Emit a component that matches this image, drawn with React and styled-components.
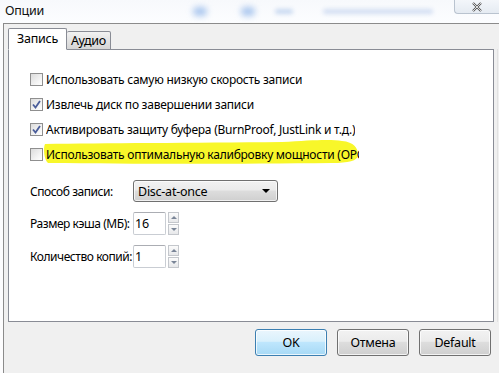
import React from "react";
import styled, { createGlobalStyle } from "styled-components";

const Global = createGlobalStyle`
  html, body { margin: 0; padding: 0; background: #ffffff; }
  body { font-family: "Noto Sans", "Open Sans", sans-serif; font-size: 12px; letter-spacing: -0.25px; color: #000; }
`;

const Win = styled.div`
  width: 499px;
  height: 373px;
  overflow: hidden;
  background: #fdfdfe;
  display: flex;
  flex-direction: column;
`;

const TitleBar = styled.div`
  height: 23px;
  flex: none;
  display: flex;
  align-items: center;
  padding-left: 5px;
  font-size: 12.5px;
  color: #111;
  background: linear-gradient(#f7f9fc, #fcfdff);
`;

const Title = styled.span`
  width: 180px;
  margin-top: -2px;
`;

const Blob = styled.span`
  display: block;
  width: ${(p) => p.$w}px;
  height: ${(p) => p.$h}px;
  margin-left: ${(p) => p.$ml}px;
  border-radius: 6px;
  background: ${(p) => p.$c};
  filter: blur(${(p) => p.$b}px);
`;

const CloseBtn = styled.div`
  margin-left: auto;
  align-self: flex-start;
  width: 44px;
  height: 13px;
  border: 1px solid #b9c3cf;
  border-top: none;
  border-right: none;
  border-radius: 0 0 0 4px;
  background: linear-gradient(#f3f6fa, #e5ebf2);
  display: flex;
  align-items: center;
  justify-content: center;
`;

const Frame = styled.div`
  flex: 1;
  margin-left: 3px;
  border-left: 1px solid #8b8b8b;
  border-top: 1px solid #8b8b8b;
  background: #f0f0f0;
  padding: 4px 0 0 4px;
  display: flex;
  flex-direction: column;
`;

const Tabs = styled.div`
  display: flex;
  align-items: flex-end;
  height: 22px;
  position: relative;
  z-index: 1;
  margin-bottom: -1px;
`;

const Tab = styled.div`
  height: ${(p) => (p.$active ? 22 : 19)}px;
  padding: 0 ${(p) => (p.$active ? 8 : 4)}px;
  box-sizing: border-box;
  border: 1px solid #898c95;
  border-bottom: ${(p) => (p.$active ? "1px solid #ffffff" : "1px solid #898c95")};
  ${(p) => (p.$active ? "" : "border-left: none;")}
  border-radius: 2px 2px 0 0;
  background: ${(p) => (p.$active ? "#ffffff" : "linear-gradient(#f2f2f2, #e3e3e3 50%, #d6d6d6)")};
  display: flex;
  align-items: center;
  font-size: 12.5px;
  color: #000;
  padding-bottom: ${(p) => (p.$active ? 2 : 0)}px;
`;

const Body = styled.div`
  display: flex;
  align-items: stretch;
`;

const Panel = styled.div`
  width: 486px;
  height: 273px;
  flex: none;
  box-sizing: border-box;
  border: 1px solid #898c95;
  background: #ffffff;
  padding: 23px 0 0 21px;
  display: flex;
  flex-direction: column;
`;

const EdgeLine = styled.div`
  margin-left: 3px;
  width: 1px;
  background: #e2e2e2;
`;

const CheckList = styled.div`
  display: flex;
  flex-direction: column;
  gap: 12px;
`;

const CheckRow = styled.div`
  display: flex;
  align-items: center;
  height: 13px;
  gap: 3px;
  position: relative;
`;

const Box = styled.span`
  width: 13px;
  height: 13px;
  flex: none;
  box-sizing: border-box;
  border: 1px solid #8f8f8f;
  background: linear-gradient(135deg, #dcdcdc, #f6f6f6 70%, #ffffff);
  display: flex;
  align-items: center;
  justify-content: center;
  position: relative;
  z-index: 1;
`;

const Label = styled.span`
  white-space: nowrap;
  overflow: hidden;
  max-width: ${(p) => (p.$max ? p.$max + "px" : "none")};
  position: relative;
  z-index: 1;
  line-height: 16px;
`;

const Marker = styled.svg`
  position: absolute;
  left: 12px;
  top: -12px;
  z-index: 0;
`;

const Form = styled.div`
  margin-top: 19px;
  display: flex;
  flex-direction: column;
  gap: 10px;
`;

const FormRow = styled.div`
  display: flex;
  align-items: center;
  height: ${(p) => p.$h}px;
`;

const FieldLabel = styled.span`
  flex: none;
  min-width: ${(p) => p.$w}px;
  white-space: nowrap;
  letter-spacing: -0.45px;
`;

const Select = styled.div`
  width: 145px;
  height: 22px;
  box-sizing: border-box;
  border: 1px solid #707070;
  border-radius: 3px;
  background: linear-gradient(#f2f2f2, #ebebeb 45%, #dddddd 50%, #cfcfcf);
  box-shadow: inset 0 0 0 1px rgba(255, 255, 255, 0.7);
  display: flex;
  align-items: center;
  justify-content: space-between;
  padding: 0 7px 0 4px;
  font-size: 12.5px;
`;

const Arrow = styled.span`
  width: 0;
  height: 0;
  border-left: 4px solid transparent;
  border-right: 4px solid transparent;
  border-top: 4px solid #000;
`;

const NumInput = styled.div`
  width: 33px;
  height: 23px;
  flex: none;
  box-sizing: border-box;
  border: 1px solid #c9cdd3;
  border-top-color: #abadb3;
  border-radius: 2px;
  background: #fff;
  display: flex;
  align-items: center;
  padding-left: 1px;
  font-size: 12.5px;
`;

const Spinner = styled.div`
  margin-left: 2px;
  width: 11px;
  height: 23px;
  display: flex;
  flex-direction: column;
  gap: 1px;
`;

const SpinBtn = styled.div`
  flex: 1;
  box-sizing: border-box;
  border: 1px solid #c4c7cc;
  background: linear-gradient(#fbfbfb, #e7e8ea);
  display: flex;
  align-items: center;
  justify-content: center;
`;

const Tri = styled.span`
  width: 0;
  height: 0;
  border-left: 3px solid transparent;
  border-right: 3px solid transparent;
  ${(p) => (p.$up ? "border-bottom: 3px solid #7a8597;" : "border-top: 3px solid #7a8597;")}
`;

const Buttons = styled.div`
  display: flex;
  justify-content: flex-end;
  gap: 10px;
  padding: 7px 3px 0 0;
  width: 486px;
  box-sizing: border-box;
`;

const Button = styled.div`
  width: 72px;
  height: 27px;
  box-sizing: border-box;
  border: 1px solid ${(p) => (p.$focus ? "#3c7fb1" : "#707070")};
  border-radius: 3px;
  background: ${(p) =>
    p.$focus
      ? "linear-gradient(#eaf6fd, #d9f0fc 45%, #bee6fd 50%, #a7d9f5)"
      : "linear-gradient(#f2f2f2, #ebebeb 45%, #dddddd 50%, #cfcfcf)"};
  box-shadow: inset 0 0 0 1px rgba(255, 255, 255, 0.75);
  display: flex;
  align-items: center;
  justify-content: center;
  font-size: 12.5px;
  color: #000;
`;

function Check({ checked }) {
  return (
    <Box>
      {checked && (
        <svg width="9" height="9" viewBox="0 0 9 9">
          <path d="M1 4.5 L3.5 7.5 L8 1" fill="none" stroke="#4a5d9a" strokeWidth="1.8" />
        </svg>
      )}
    </Box>
  );
}

function Spin() {
  return (
    <Spinner>
      <SpinBtn>
        <Tri $up />
      </SpinBtn>
      <SpinBtn>
        <Tri />
      </SpinBtn>
    </Spinner>
  );
}

export default function App() {
  return (
    <>
      <Global />
      <Win>
        <TitleBar>
          <Title>Опции</Title>
          <Blob $w={14} $h={9} $ml={8} $c="#a9c6ee" $b={3} />
          <Blob $w={14} $h={9} $ml={34} $c="#a9c6ee" $b={3} />
          <Blob $w={18} $h={5} $ml={20} $c="#c7d8f0" $b={2} />
          <Blob $w={110} $h={5} $ml={30} $c="#d2def2" $b={2} />
          <CloseBtn>
            <svg width="12" height="10" viewBox="0 0 12 10">
              <path d="M2 1 L10 9 M10 1 L2 9" stroke="#555" strokeWidth="2.2" />
              <path d="M2 1 L10 9 M10 1 L2 9" stroke="#fff" strokeWidth="0.8" />
            </svg>
          </CloseBtn>
        </TitleBar>
        <Frame>
          <Tabs>
            <Tab $active>Запись</Tab>
            <Tab>Аудио</Tab>
          </Tabs>
          <Body>
            <Panel>
              <CheckList>
                <CheckRow>
                  <Check />
                  <Label>Использовать самую низкую скорость записи</Label>
                </CheckRow>
                <CheckRow>
                  <Check checked />
                  <Label>Извлечь диск по завершении записи</Label>
                </CheckRow>
                <CheckRow>
                  <Check checked />
                  <Label>Активировать защиту буфера (BurnProof, JustLink и т.д.)</Label>
                </CheckRow>
                <CheckRow>
                  <Check />
                  <Marker width="320" height="30" viewBox="0 0 320 30">
                    <path
                      d="M3 8 C60 7 150 7 240 6 C270 4 290 3 300 5 C312 6 316 12 316 19 C316 25 306 27 290 27 C200 28 90 28 6 27 C2 24 1 12 3 8 Z"
                      fill="#f8f72a"
                    />
                  </Marker>
                  <Label $max={313}>Использовать оптимальную калибровку мощности (OPC)</Label>
                </CheckRow>
              </CheckList>
              <Form>
                <FormRow $h={22}>
                  <FieldLabel $w={103}>Способ записи:</FieldLabel>
                  <Select>
                    Disc-at-once
                    <Arrow />
                  </Select>
                </FormRow>
                <FormRow $h={23}>
                  <FieldLabel $w={103}>Размер кэша (МБ):</FieldLabel>
                  <NumInput>16</NumInput>
                  <Spin />
                </FormRow>
                <FormRow $h={23}>
                  <FieldLabel $w={103}>Количество копий:</FieldLabel>
                  <NumInput>1</NumInput>
                  <Spin />
                </FormRow>
              </Form>
            </Panel>
            <EdgeLine />
          </Body>
          <Buttons>
            <Button $focus>OK</Button>
            <Button>Отмена</Button>
            <Button>Default</Button>
          </Buttons>
        </Frame>
      </Win>
    </>
  );
}
